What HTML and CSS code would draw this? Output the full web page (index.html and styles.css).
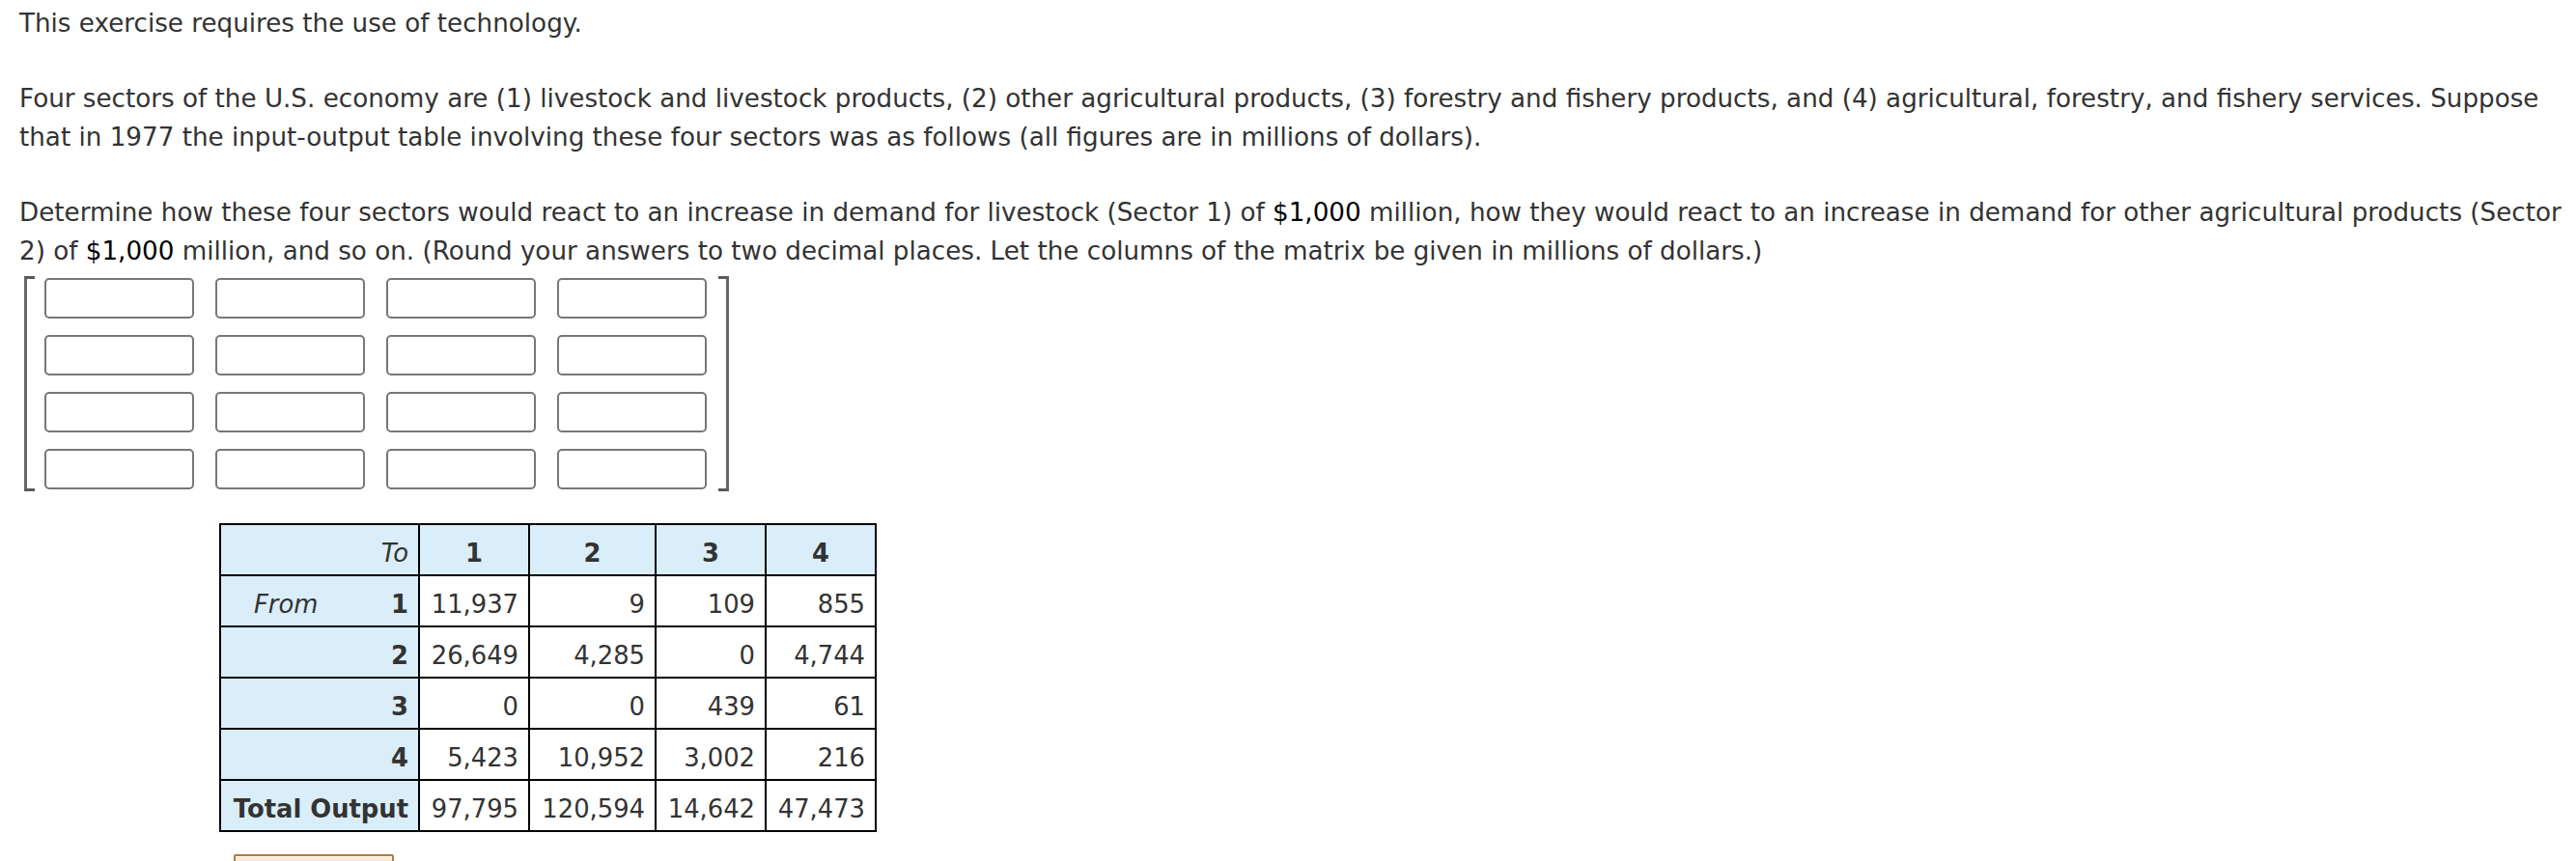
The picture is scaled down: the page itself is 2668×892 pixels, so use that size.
FILE: index.html
```html
<!DOCTYPE html>
<html>
<head>
<meta charset="utf-8">
<link rel="stylesheet" href="styles.css">
</head>
<body>
<div class="page">
  <p class="para first">This exercise requires the use of technology.</p>
  <p class="para">Four sectors of the U.S. economy are (1) livestock and livestock products, (2) other agricultural products, (3) forestry and fishery products, and (4) agricultural, forestry, and fishery services. Suppose that in 1977 the input-output table involving these four sectors was as follows (all figures are in millions of dollars).</p>
  <p class="para">Determine how these four sectors would react to an increase in demand for livestock (Sector 1) of <span class="money">$1,000</span> million, how they would react to an increase in demand for other agricultural products (Sector 2) of <span class="money">$1,000</span> million, and so on. (Round your answers to two decimal places. Let the columns of the matrix be given in millions of dollars.)</p>

  <div class="matrix">
    <div class="bracket left"></div>
    <div class="cells">
      <input class="cell" type="text"><input class="cell" type="text"><input class="cell" type="text"><input class="cell" type="text">
      <input class="cell" type="text"><input class="cell" type="text"><input class="cell" type="text"><input class="cell" type="text">
      <input class="cell" type="text"><input class="cell" type="text"><input class="cell" type="text"><input class="cell" type="text">
      <input class="cell" type="text"><input class="cell" type="text"><input class="cell" type="text"><input class="cell" type="text">
    </div>
    <div class="bracket right"></div>
  </div>

  <table class="io">
    <colgroup>
      <col class="c0"><col class="c1"><col class="c2"><col class="c3"><col class="c4">
    </colgroup>
    <tr class="head">
      <td class="lab"><i>To</i></td>
      <th>1</th><th>2</th><th>3</th><th>4</th>
    </tr>
    <tr>
      <td class="lab"><div class="from"><i>From</i><b>1</b></div></td>
      <td>11,937</td><td>9</td><td>109</td><td>855</td>
    </tr>
    <tr>
      <td class="lab"><b>2</b></td>
      <td>26,649</td><td>4,285</td><td>0</td><td>4,744</td>
    </tr>
    <tr>
      <td class="lab"><b>3</b></td>
      <td>0</td><td>0</td><td>439</td><td>61</td>
    </tr>
    <tr>
      <td class="lab"><b>4</b></td>
      <td>5,423</td><td>10,952</td><td>3,002</td><td>216</td>
    </tr>
    <tr>
      <td class="lab"><b>Total Output</b></td>
      <td>97,795</td><td>120,594</td><td>14,642</td><td>47,473</td>
    </tr>
  </table>

  <div class="btn-row"><button class="btn" type="button">&nbsp;</button></div>
</div>
</body>
</html>
```

FILE: styles.css
```css
html, body {
  margin: 0;
  padding: 0;
  background: #fff;
}

.page {
  padding: 4px 12px 0 20px;
  font-family: "DejaVu Sans", Verdana, sans-serif;
  font-size: 26.2px;
  line-height: 40px;
  color: #333;
}

.para {
  margin: 38px 0 0 0;
}

.para.first {
  margin-top: 0;
}

.money {
  color: #000;
}

.matrix {
  display: flex;
  align-items: stretch;
  margin: 6px 0 0 5px;
}

.bracket {
  width: 8px;
  border-top: 3px solid #5a5a5a;
  border-bottom: 3px solid #5a5a5a;
}

.bracket.left {
  border-left: 3px solid #666;
}

.bracket.right {
  border-right: 3px solid #666;
  margin-left: 12px;
}

.cells {
  display: grid;
  grid-template-columns: repeat(4, 155px);
  column-gap: 22px;
  row-gap: 17px;
  padding: 2px 0 2px 0;
  margin-left: 10px;
}

.cell {
  box-sizing: border-box;
  width: 155px;
  height: 42px;
  margin: 0;
  border: 2px solid #777;
  border-radius: 5px;
  background: #fff;
  font: inherit;
}

.io {
  margin: 33px 0 0 207px;
  border-collapse: collapse;
  table-layout: fixed;
  width: 681px;
  border: 2px solid #000;
  font-size: 25.8px;
}

.io col.c0 { width: 206px; }
.io col.c1 { width: 114px; }
.io col.c2 { width: 131px; }
.io col.c3 { width: 114px; }
.io col.c4 { width: 114px; }

.io tr {
  height: 53px;
}

.io td, .io th {
  border: 2px solid #000;
  padding: 6px 10px 0 10px;
  text-align: right;
  white-space: nowrap;
  font-weight: normal;
  line-height: 30px;
}

.io th {
  text-align: center;
  font-weight: bold;
  background: #daeefa;
}

.io td.lab {
  background: #daeefa;
}

.io .from {
  display: flex;
  justify-content: space-between;
  padding-left: 24px;
}

.btn-row {
  margin: 23px 0 0 222px;
}

.btn {
  display: block;
  width: 166px;
  height: 40px;
  border: 2px solid #b27b41;
  border-radius: 2px;
  background: linear-gradient(#fbeedd, #f1d3ad);
  box-shadow: inset 0 1px 0 #fff8ee;
}
```
